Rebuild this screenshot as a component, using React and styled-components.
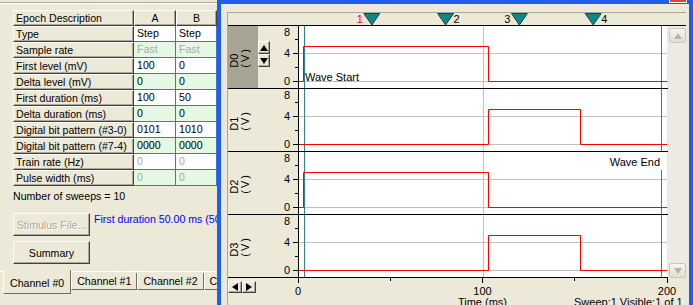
import styled, { createGlobalStyle } from 'styled-components';

const GlobalStyle = createGlobalStyle`
  * { box-sizing: border-box; }
  html, body { margin: 0; padding: 0; }
  body {
    background: #ece9d8;
    font-family: "Liberation Sans", Arial, sans-serif;
    font-size: 10.6px;
    color: #000;
  }
`;

const raised = `
  background: #ece9d8;
  border-top: 1px solid #fff;
  border-left: 1px solid #fff;
  border-right: 1px solid #404040;
  border-bottom: 1px solid #404040;
  box-shadow: inset -1px -1px 0 #aca899;
`;

const Screen = styled.div`
  position: relative;
  display: flex;
  width: 693px;
  height: 305px;
  overflow: hidden;
  background: #ece9d8;
`;

/* ---- protocol editor ---- */

const Editor = styled.div`
  display: flex;
  flex-direction: column;
  width: 217px;
  flex-shrink: 0;
  overflow: hidden;
`;

const TopRule = styled.div`
  height: 2px;
  margin-top: 2px;
  border-top: 1px solid #aca899;
  border-bottom: 1px solid #fff;
`;

const EpochGrid = styled.div`
  display: grid;
  grid-template-columns: 121px 42px 41px;
  grid-auto-rows: 16px;
  margin: 6px 0 0 13px;
  white-space: nowrap;
`;

const HeadCell = styled.div`
  ${raised}
  padding: 0 2px;
  line-height: 14px;
  text-align: ${(p) => (p.$center ? 'center' : 'left')};
  overflow: hidden;
`;

const ValueCell = styled.div`
  padding: 0 3px;
  line-height: 15px;
  background: ${(p) => (p.$tint ? '#e4f8e2' : '#fff')};
  color: ${(p) => (p.$muted ? '#a9a9a9' : '#000')};
  border-right: 1px solid #3a72e8;
  border-bottom: 1px solid #3a72e8;
  overflow: hidden;
`;

const SweepCount = styled.div`
  margin: 3px 0 0 13px;
  line-height: 14px;
`;

const ControlRow = styled.div`
  display: flex;
  align-items: flex-start;
  margin: 10px 0 0 13px;
`;

const ButtonStack = styled.div`
  display: flex;
  flex-direction: column;
  gap: 5px;
  flex-shrink: 0;
`;

const PushButton = styled.div`
  ${raised}
  width: 77px;
  height: 23px;
  display: flex;
  align-items: center;
  justify-content: center;
  color: ${(p) => (p.$disabled ? '#aca899' : '#000')};
  text-shadow: ${(p) => (p.$disabled ? '1px 1px 0 #fff' : 'none')};
`;

const InfoText = styled.div`
  margin: -1px 0 0 4px;
  line-height: 14px;
  color: #0000ff;
  white-space: nowrap;
`;

const TabStrip = styled.div`
  display: flex;
  align-items: flex-start;
  height: 31px;
  margin-top: 7px;
  padding-left: 3px;
  border-top: 1px solid #fff;
  white-space: nowrap;
`;

const Tab = styled.div`
  flex-shrink: 0;
  height: ${(p) => (p.$active ? '24px' : '17px')};
  margin-top: ${(p) => (p.$active ? '-2px' : '1px')};
  padding: ${(p) => (p.$active ? '6px 6px 0' : '1px 5px 0')};
  line-height: 14px;
  background: #ece9d8;
  border-left: 1px solid #fff;
  border-right: 1px solid #716f64;
  border-bottom: 1px solid #716f64;
`;

/* ---- waveform preview window ---- */

const Window = styled.div`
  position: relative;
  flex: 1;
  display: flex;
  padding: 8px 3px 0 6px;
  border: 4px solid #1f5ee8;
  border-bottom: none;
  background: #ece9d8;
`;

const CloseNub = styled.div`
  position: absolute;
  top: -4px;
  right: 2px;
  width: 18px;
  height: 3px;
  background: #d9492b;
  border: 1px solid #fff;
  border-top: none;
`;

const Frame = styled.div`
  display: flex;
  flex-direction: column;
  width: 459px;
  border-top: 1px solid #aca899;
  border-left: 1px solid #aca899;
`;

const MarkerBar = styled.div`
  height: 13px;
  border-bottom: 1px solid #000;
`;

const Body = styled.div`
  display: flex;
`;

const Channels = styled.div`
  display: flex;
  flex-direction: column;
  width: 440px;
`;

const Row = styled.div`
  position: relative;
  display: flex;
  height: 63px;
  border-bottom: 1px solid #000;
`;

const ChannelLabel = styled.div`
  width: 30px;
  flex-shrink: 0;
  display: flex;
  align-items: center;
  padding-left: 1px;
  font-size: 11px;
  background: ${(p) => (p.$selected ? '#a8a594' : '#ece9d8')};
`;

const RotatedText = styled.div`
  writing-mode: vertical-rl;
  transform: rotate(180deg);
  line-height: 11px;
  white-space: nowrap;
`;

const Unit = styled.span`
  letter-spacing: 2px;
`;

const Spinner = styled.div`
  position: absolute;
  left: 30px;
  top: 15px;
  display: flex;
  flex-direction: column;
`;

const SmallButton = styled.div`
  ${raised}
  width: ${(p) => p.$w}px;
  height: ${(p) => p.$h}px;
  display: flex;
  align-items: center;
  justify-content: center;
`;

const VScroll = styled.div`
  width: 18px;
  display: flex;
  flex-direction: column;
  justify-content: space-between;
  padding: 2px 0 0 1px;
  background: repeating-conic-gradient(#f5f4ef 0 25%, #e4e2d7 0 50%) 0 0 / 2px 2px;
`;

const ScrollButton = styled.div`
  width: 17px;
  height: 15px;
  display: flex;
  align-items: center;
  justify-content: center;
  border: 1px solid #cac8bb;
  border-radius: 2px;
  background: linear-gradient(#f7f6f1, #e0ddd0);
`;

const AxisRow = styled.div`
  display: flex;
  height: 40px;
`;

const NavCol = styled.div`
  width: 30px;
  flex-shrink: 0;
  display: flex;
  align-items: flex-start;
  padding-top: 3px;
`;

const PlotSvg = styled.svg`
  display: block;
  flex-shrink: 0;
  overflow: visible;
  font-family: "Liberation Sans", Arial, sans-serif;
  font-size: 11px;
`;

const rows = [
  ['Type', 'Step', 'Step'],
  ['Sample rate', 'Fast', 'Fast', true],
  ['First level (mV)', '100', '0'],
  ['Delta level (mV)', '0', '0'],
  ['First duration (ms)', '100', '50'],
  ['Delta duration (ms)', '0', '0'],
  ['Digital bit pattern (#3-0)', '0101', '1010'],
  ['Digital bit pattern (#7-4)', '0000', '0000'],
  ['Train rate (Hz)', '0', '0', true],
  ['Pulse width (ms)', '0', '0', true],
];

const AX = 40;
const px = (t) => AX + t * 1.845;
const snap = (v) => Math.round(v) + 0.5;
const T0 = snap(px(3.125) - 0.5);
const TA = snap(px(103.125) - 0.5);
const TB = snap(px(153.125) - 0.5);
const TEND = px(200);

const traces = {
  a: `M${AX},55.5 H${T0} V20.5 H${TA} V55.5 H${TEND}`,
  b: `M${AX},55.5 H${TA} V20.5 H${TB} V55.5 H${TEND}`,
};

const channels = [
  { name: 'D0', trace: 'a', selected: true, note: 'start' },
  { name: 'D1', trace: 'b' },
  { name: 'D2', trace: 'a', note: 'end' },
  { name: 'D3', trace: 'b' },
];

const markers = [
  { n: '1', t: 40, side: 'left', color: '#ff0000' },
  { n: '2', t: 80, side: 'right', color: '#000' },
  { n: '3', t: 120, side: 'left', color: '#000' },
  { n: '4', t: 160, side: 'right', color: '#000' },
];

const Arrow = ({ dir, color = '#000' }) => {
  const pts = {
    up: '0,6 4,0 8,6',
    down: '0,0 8,0 4,6',
    left: '6,0 6,8 0,4',
    right: '0,0 0,8 6,4',
  }[dir];
  const vertical = dir === 'up' || dir === 'down';
  return (
    <svg width={vertical ? 8 : 6} height={vertical ? 6 : 8}>
      <polygon points={pts} fill={color} />
    </svg>
  );
};

function ChannelPlot({ trace, note }) {
  return (
    <PlotSvg width="410" height="62">
      <rect x={AX} y="0" width={TEND - AX} height="62" fill="#fff" />
      <line x1={AX} x2={TEND} y1="27.5" y2="27.5" stroke="#c0c0c0" />
      <line x1={AX} x2={TEND} y1="55.5" y2="55.5" stroke="#c0c0c0" />
      <line x1={snap(px(100))} x2={snap(px(100))} y1="0" y2="62" stroke="#c0c0c0" />
      <line x1="46.5" x2="46.5" y1="0" y2="62" stroke="#2f8585" />
      <line x1="403.5" x2="403.5" y1={note === 'end' ? 18 : 0} y2="62" stroke="#2f8585" />
      <path d={traces[trace]} stroke="#ff0000" fill="none" />
      <line x1="35" x2="40" y1="27.5" y2="27.5" stroke="#000" />
      <line x1="35" x2="40" y1="55.5" y2="55.5" stroke="#000" />
      <line x1="37" x2="40" y1="13.5" y2="13.5" stroke="#000" />
      <line x1="37" x2="40" y1="41.5" y2="41.5" stroke="#000" />
      <line x1="40.5" x2="40.5" y1="0" y2="62" stroke="#000" />
      <text x="32" y="10" textAnchor="end">8</text>
      <text x="32" y="31" textAnchor="end">4</text>
      <text x="32" y="59" textAnchor="end">0</text>
      {note === 'start' && (
        <text x="47" y="55">Wave Start</text>
      )}
      {note === 'end' && (
        <text x="402" y="14" textAnchor="end">Wave End</text>
      )}
    </PlotSvg>
  );
}

function WavePreview() {
  return (
    <Window>
      <CloseNub />
      <Frame>
        <MarkerBar>
          <PlotSvg width="458" height="12">
            {markers.map((m) => {
              const cx = px(m.t) + 30;
              return (
                <g key={m.n}>
                  <polygon
                    points={`${cx - 8},0.5 ${cx + 8},0.5 ${cx},12`}
                    fill="#148585"
                    stroke="#0b4a4a"
                  />
                  <text
                    x={m.side === 'left' ? cx - 9 : cx + 8}
                    y="10"
                    textAnchor={m.side === 'left' ? 'end' : 'start'}
                    fill={m.color}
                  >
                    {m.n}
                  </text>
                </g>
              );
            })}
          </PlotSvg>
        </MarkerBar>
        <Body>
          <Channels>
            {channels.map((c) => (
              <Row key={c.name}>
                <ChannelLabel $selected={c.selected}>
                  <RotatedText>
                    {c.name}
                    <br />
                    <Unit>(V)</Unit>
                  </RotatedText>
                </ChannelLabel>
                <ChannelPlot trace={c.trace} note={c.note} />
                {c.selected && (
                  <Spinner>
                    <SmallButton $w={12} $h={13}>
                      <Arrow dir="up" />
                    </SmallButton>
                    <SmallButton $w={12} $h={13}>
                      <Arrow dir="down" />
                    </SmallButton>
                  </Spinner>
                )}
              </Row>
            ))}
          </Channels>
          <VScroll>
            <ScrollButton>
              <Arrow dir="up" color="#b3b1a3" />
            </ScrollButton>
            <ScrollButton>
              <Arrow dir="down" color="#b3b1a3" />
            </ScrollButton>
          </VScroll>
        </Body>
        <AxisRow>
          <NavCol>
            <SmallButton $w={14} $h={12}>
              <Arrow dir="left" />
            </SmallButton>
            <SmallButton $w={14} $h={12}>
              <Arrow dir="right" />
            </SmallButton>
          </NavCol>
          <PlotSvg width="428" height="40">
            {[0, 50, 100, 150, 200].map((t) => (
              <line
                key={t}
                x1={snap(px(t) - 0.5)}
                x2={snap(px(t) - 0.5)}
                y1="0"
                y2={t % 100 === 0 ? 5 : 3}
                stroke="#000"
              />
            ))}
            <text x={px(0)} y="17" textAnchor="middle">0</text>
            <text x={px(100)} y="17" textAnchor="middle">100</text>
            <text x={px(200)} y="17" textAnchor="middle">200</text>
            <text x={px(100)} y="28" textAnchor="middle">Time (ms)</text>
            <text x="316" y="28">Sweep:1 Visible:1 of 1</text>
          </PlotSvg>
        </AxisRow>
      </Frame>
    </Window>
  );
}

function ProtocolEditor() {
  return (
    <Editor>
      <TopRule />
      <EpochGrid>
        <HeadCell>Epoch Description</HeadCell>
        <HeadCell $center>A</HeadCell>
        <HeadCell $center>B</HeadCell>
        {rows.map(([label, a, b, muted], i) => [
          <HeadCell key={`${label}-l`}>{label}</HeadCell>,
          <ValueCell key={`${label}-a`} $tint={i % 2 === 1} $muted={muted}>
            {a}
          </ValueCell>,
          <ValueCell key={`${label}-b`} $tint={i % 2 === 1} $muted={muted}>
            {b}
          </ValueCell>,
        ])}
      </EpochGrid>
      <SweepCount>Number of sweeps = 10</SweepCount>
      <ControlRow>
        <ButtonStack>
          <PushButton $disabled>Stimulus File...</PushButton>
          <PushButton>Summary</PushButton>
        </ButtonStack>
        <InfoText>First duration 50.00 ms (50 samples)</InfoText>
      </ControlRow>
      <TabStrip>
        <Tab $active>Channel #0</Tab>
        <Tab>Channel #1</Tab>
        <Tab>Channel #2</Tab>
        <Tab>Channel #3</Tab>
      </TabStrip>
    </Editor>
  );
}

export default function App() {
  return (
    <>
      <GlobalStyle />
      <Screen>
        <ProtocolEditor />
        <WavePreview />
      </Screen>
    </>
  );
}
